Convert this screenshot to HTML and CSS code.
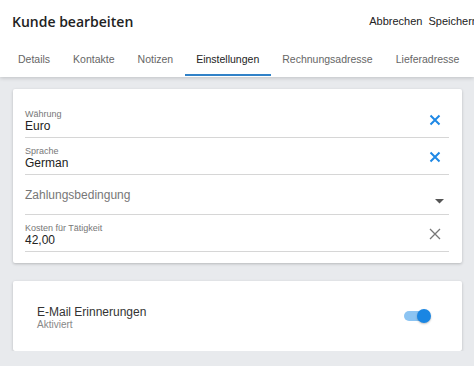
FILE: index.html
```html
<!DOCTYPE html>
<html lang="de">
<head>
<meta charset="utf-8">
<title>Kunde bearbeiten</title>
<link rel="stylesheet" href="styles.css">
</head>
<body>
<div class="page">
  <header class="header">
    <div class="topbar">
      <h1 class="title">Kunde bearbeiten</h1>
      <div class="actions">
        <span class="action">Abbrechen</span>
        <span class="action">Speichern</span>
      </div>
    </div>
    <nav class="tabs">
      <span class="tab">Details</span>
      <span class="tab">Kontakte</span>
      <span class="tab">Notizen</span>
      <span class="tab active">Einstellungen</span>
      <span class="tab">Rechnungsadresse</span>
      <span class="tab">Lieferadresse</span>
    </nav>
  </header>
  <main class="content">
    <section class="card form">
      <div class="field">
        <div class="field-text">
          <div class="label">Währung</div>
          <div class="value">Euro</div>
        </div>
        <span class="icon">
          <svg width="12" height="12" viewBox="0 0 12 12"><path d="M1.5 1.5 L10.5 10.5 M10.5 1.5 L1.5 10.5" stroke="#1e88e5" stroke-width="2" fill="none"/></svg>
        </span>
      </div>
      <div class="field">
        <div class="field-text">
          <div class="label">Sprache</div>
          <div class="value">German</div>
        </div>
        <span class="icon">
          <svg width="12" height="12" viewBox="0 0 12 12"><path d="M1.5 1.5 L10.5 10.5 M10.5 1.5 L1.5 10.5" stroke="#1e88e5" stroke-width="2" fill="none"/></svg>
        </span>
      </div>
      <div class="field select">
        <div class="placeholder">Zahlungsbedingung</div>
        <span class="arrow">
          <svg width="9" height="5" viewBox="0 0 9 5"><path d="M0 0 L9 0 L4.5 4.5 Z" fill="#555"/></svg>
        </span>
      </div>
      <div class="field">
        <div class="field-text">
          <div class="label">Kosten für Tätigkeit</div>
          <div class="value">42,00</div>
        </div>
        <span class="icon">
          <svg width="12" height="12" viewBox="0 0 12 12"><path d="M1 1 L11 11 M11 1 L1 11" stroke="#777" stroke-width="1.3" fill="none"/></svg>
        </span>
      </div>
    </section>
    <section class="card setting">
      <div class="setting-text">
        <div class="setting-title">E-Mail Erinnerungen</div>
        <div class="setting-sub">Aktiviert</div>
      </div>
      <div class="switch">
        <span class="track"></span>
        <span class="knob"></span>
      </div>
    </section>
  </main>
</div>
</body>
</html>
```

FILE: styles.css
```css
* { box-sizing: border-box; }
html, body {
  margin: 0;
  padding: 0;
}
body {
  background: #e8eaed;
  font-family: "Liberation Sans", Arial, sans-serif;
  color: #333;
  width: 474px;
  height: 366px;
  overflow: hidden;
}
.page {
  width: 474px;
  overflow: hidden;
}
.header {
  background: #fff;
  height: 77px;
  box-shadow: 0 1px 4px rgba(0, 0, 0, 0.18);
  display: flex;
  flex-direction: column;
  position: relative;
  z-index: 1;
}
.topbar {
  height: 44px;
  display: flex;
  align-items: center;
  padding-left: 12px;
}
.title {
  flex: 1;
  margin: 0;
  font-family: "Open Sans", "Noto Sans", sans-serif;
  font-weight: 600;
  font-size: 14px;
  color: #222;
  padding-bottom: 1px;
}
.actions {
  display: flex;
  gap: 6px;
  margin-right: -4px;
  font-size: 11px;
  color: #222;
  white-space: nowrap;
  flex-shrink: 0;
  padding-bottom: 3px;
}
.tabs {
  display: flex;
  height: 33px;
  padding-left: 6.5px;
  white-space: nowrap;
}
.tab {
  padding: 0 11.5px;
  font-size: 10.5px;
  color: #666;
  display: flex;
  align-items: center;
  border-bottom: 2px solid transparent;
  margin-bottom: 1px;
}
.tab.active {
  color: #222;
  border-bottom-color: #3182c8;
}
.content {
  padding: 12px 12px 0 13px;
  display: flex;
  flex-direction: column;
  gap: 18px;
}
.card {
  background: #fff;
  border-radius: 2px;
  box-shadow: 0 1px 3px rgba(0, 0, 0, 0.22);
}
.form {
  padding: 12px 13px 11px 12px;
  display: flex;
  flex-direction: column;
}
.field {
  display: flex;
  align-items: flex-start;
  border-bottom: 1px solid #d6d6d6;
  padding: 9px 0 4px;
}
.field-text {
  flex: 1;
  display: flex;
  flex-direction: column;
}
.label {
  font-size: 9px;
  line-height: 9px;
  color: #777;
}
.value {
  font-size: 12px;
  line-height: 14px;
  color: #222;
}
.icon {
  width: 20px;
  height: 20px;
  display: flex;
  align-items: center;
  justify-content: center;
  margin-right: 4px;
}
.select {
  height: 40px;
  padding: 0;
  align-items: center;
}
.placeholder {
  flex: 1;
  font-size: 12px;
  line-height: 14px;
  color: #777;
}
.arrow {
  display: flex;
  margin-right: 5px;
  margin-top: 14px;
}
.setting {
  height: 70px;
  display: flex;
  align-items: center;
  padding: 0 31px 0 24px;
}
.setting-text {
  flex: 1;
  display: flex;
  flex-direction: column;
  margin-top: 4px;
}
.setting-title {
  font-size: 12px;
  line-height: 14px;
  color: #333;
}
.setting-sub {
  font-size: 10px;
  line-height: 12px;
  color: #888;
}
.switch {
  position: relative;
  width: 27px;
  height: 14px;
}
.track {
  position: absolute;
  left: 0;
  top: 2px;
  width: 24px;
  height: 10px;
  border-radius: 5px;
  background: #8cc4f2;
}
.knob {
  position: absolute;
  right: 0;
  top: 0;
  width: 14px;
  height: 14px;
  border-radius: 50%;
  background: #1a86e3;
  box-shadow: 0 1px 2px rgba(0, 0, 0, 0.25);
}
```
